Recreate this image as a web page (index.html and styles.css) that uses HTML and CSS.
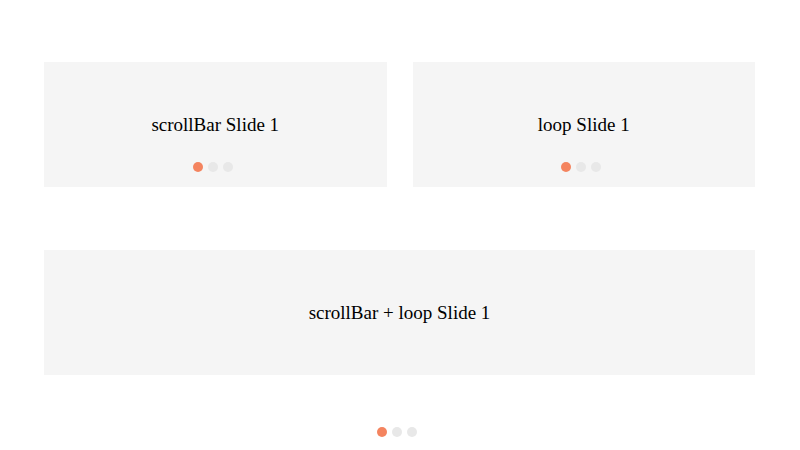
FILE: index.html
```html
<!DOCTYPE html>
<html>
<head>
<meta charset="utf-8">
<link rel="stylesheet" href="styles.css">
</head>
<body>
<div class="page">
  <div class="row">
    <div class="card">
      <div class="slide">scrollBar Slide 1</div>
      <div class="dots dots-inside">
        <span class="dot active"></span><span class="dot"></span><span class="dot"></span>
      </div>
    </div>
    <div class="card">
      <div class="slide">loop Slide 1</div>
      <div class="dots dots-inside">
        <span class="dot active"></span><span class="dot"></span><span class="dot"></span>
      </div>
    </div>
  </div>
  <div class="wide">
    <div class="card">
      <div class="slide">scrollBar + loop Slide 1</div>
    </div>
    <div class="dots dots-outside">
      <span class="dot active"></span><span class="dot"></span><span class="dot"></span>
    </div>
  </div>
</div>
</body>
</html>
```
FILE: styles.css
```css
html, body {
  margin: 0;
  padding: 0;
  background: #ffffff;
  font-family: "Liberation Serif", "Times New Roman", serif;
  color: #000000;
}
.page {
  padding: 62px 45px 0 44px;
  display: flex;
  flex-direction: column;
  gap: 63px;
}
.row {
  display: grid;
  grid-template-columns: 1fr 1fr;
  gap: 26px;
}
.card {
  position: relative;
  height: 125px;
  background: #f5f5f5;
  display: flex;
  align-items: center;
  justify-content: center;
}
.slide {
  font-size: 19px;
  line-height: 24px;
}
.dots {
  display: flex;
  justify-content: center;
  gap: 5px;
  padding-right: 5px;
}
.dots-inside {
  position: absolute;
  left: 0;
  right: 0;
  bottom: 15px;
}
.dots-outside {
  margin-top: 52px;
}
.dot {
  width: 10px;
  height: 10px;
  border-radius: 50%;
  background: #e8e8e8;
}
.dot.active {
  background: #f4845f;
}
```
